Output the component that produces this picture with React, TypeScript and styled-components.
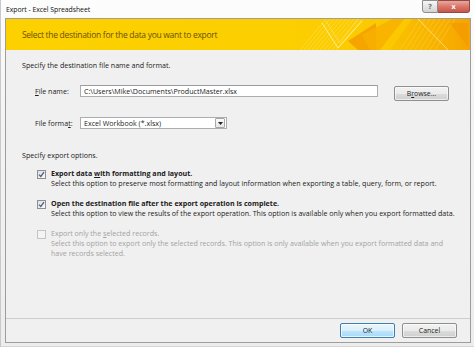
import React from "react";
import styled, { createGlobalStyle, css } from "styled-components";

const FONT = "'Open Sans', 'Noto Sans', 'Liberation Sans', sans-serif";

const Global = createGlobalStyle`
  html, body { margin: 0; padding: 0; background: #ffffff; }
  body { font-family: ${FONT}; }
  #root { width: 474px; height: 347px; }
`;

const Window = styled.div`
  width: 474px;
  height: 347px;
  box-sizing: border-box;
  display: flex;
  flex-direction: column;
  padding: 0 3px 4px 5px;
  background: linear-gradient(180deg, #fdfdfd 0%, #f4f4f4 30%, #ededed 100%);
  box-shadow: inset 1px 0 0 #c9c9c9, inset 0 -1px 0 #d6d6d6;
  font-family: ${FONT};
  color: #1b1b1b;
  overflow: hidden;
`;

const TitleBar = styled.div`
  height: 18px;
  display: flex;
  align-items: flex-start;
  justify-content: space-between;
`;

const Title = styled.span`
  margin: 5px 0 0 1px;
  font-size: 6.9px;
  line-height: 10px;
  color: #111;
  letter-spacing: -0.05px;
`;

const Captions = styled.div`
  display: flex;
  margin-right: 1px;
`;

const CapButton = styled.div<{ $close?: boolean }>`
  height: 13px;
  box-sizing: border-box;
  display: flex;
  align-items: center;
  justify-content: center;
  font-family: 'DejaVu Sans', sans-serif;
  font-size: 7px;
  font-weight: bold;
  ${(p) =>
    p.$close
      ? css`
          width: 32px;
          color: #fff;
          background: linear-gradient(180deg, #e9a89f 0%, #d9776b 50%, #c9544a 100%);
          border: 1px solid #8f4a44;
          border-left: none;
          border-radius: 0 0 3px 0;
        `
      : css`
          width: 16px;
          color: #777;
          background: linear-gradient(180deg, #f7f7f7 0%, #e3e3e3 55%, #d2d2d2 100%);
          border: 1px solid #8c8c8c;
          border-radius: 0 0 0 3px;
        `}
`;

const Client = styled.div`
  flex: 1;
  display: flex;
  flex-direction: column;
  border: 1px solid #9d9d9d;
  background: #f0f0f0;
`;

const Banner = styled.div`
  height: 31px;
  display: flex;
  align-items: center;
  background: linear-gradient(90deg, #fdd000 0%, #fccf00 60%, #fbc400 100%);
  overflow: hidden;
`;

const BannerText = styled.span`
  padding-left: 16px;
  font-size: 8.5px;
  letter-spacing: -0.3px;
  line-height: 12px;
  color: #6a5200;
  white-space: nowrap;
`;

const BannerArt = styled.svg`
  margin-left: auto;
  flex: none;
`;

const Content = styled.div`
  flex: 1;
  display: flex;
  flex-direction: column;
  padding: 10px 0 0 16px;
  font-size: 7.1px;
  line-height: 10px;
`;

const Heading = styled.div<{ $mt?: number }>`
  margin-top: ${(p) => p.$mt ?? 0}px;
  color: #1b1b1b;
`;

const FieldRow = styled.div<{ $mt: number }>`
  margin-top: ${(p) => p.$mt}px;
  margin-left: 13px;
  display: flex;
  align-items: flex-start;
`;

const FieldLabel = styled.span`
  width: 45px;
  flex: none;
  line-height: 12px;
`;

const TextBox = styled.div`
  width: 298px;
  height: 12px;
  box-sizing: border-box;
  border: 1px solid #abadb3;
  border-top-color: #9a9ca3;
  background: #fff;
  padding-left: 3px;
  line-height: 10px;
  white-space: nowrap;
`;

const Combo = styled.div`
  width: 147px;
  height: 12px;
  box-sizing: border-box;
  border: 1px solid #abadb3;
  background: #fff;
  padding-left: 3px;
  display: flex;
  align-items: center;
  justify-content: space-between;
  line-height: 10px;
`;

const ComboArrow = styled.span`
  width: 10px;
  height: 10px;
  box-sizing: border-box;
  margin-right: 1px;
  border: 1px solid #a7a7a7;
  border-radius: 1px;
  background: linear-gradient(180deg, #fafafa 0%, #e6e6e6 100%);
  display: flex;
  align-items: center;
  justify-content: center;
`;

const Button = styled.div<{ $default?: boolean; $ml?: number; $mt?: number }>`
  width: 55px;
  height: 15px;
  box-sizing: border-box;
  margin-left: ${(p) => p.$ml ?? 0}px;
  margin-top: ${(p) => p.$mt ?? 0}px;
  border-radius: 2px;
  border: 1px solid ${(p) => (p.$default ? "#3c7fb1" : "#8e8f8f")};
  background: ${(p) =>
    p.$default
      ? "linear-gradient(180deg, #eaf6fd 0%, #d9f0fc 50%, #bee6fd 51%, #a7d9f5 100%)"
      : "linear-gradient(180deg, #f2f2f2 0%, #ebebeb 50%, #dddddd 51%, #cfcfcf 100%)"};
  box-shadow: inset 0 0 0 1px ${(p) => (p.$default ? "rgba(255,255,255,0.7)" : "rgba(255,255,255,0.6)")};
  display: flex;
  align-items: center;
  justify-content: center;
  font-size: 6.9px;
  line-height: 10px;
  color: #1b1b1b;
`;

const Options = styled.div`
  margin-top: 8px;
  margin-left: 15px;
  display: flex;
  flex-direction: column;
  gap: 10px;
`;

const Option = styled.div<{ $disabled?: boolean }>`
  display: flex;
  align-items: flex-start;
  color: ${(p) => (p.$disabled ? "#a3a3a3" : "#1b1b1b")};
`;

const Box = styled.span<{ $disabled?: boolean }>`
  width: 9px;
  height: 9px;
  box-sizing: border-box;
  margin-top: 2px;
  margin-right: 5px;
  flex: none;
  border: 1px solid ${(p) => (p.$disabled ? "#c4c4c4" : "#8f8f8f")};
  background: ${(p) => (p.$disabled ? "#f4f4f4" : "linear-gradient(135deg, #dedede 0%, #fbfbfb 100%)")};
  display: flex;
  align-items: center;
  justify-content: center;
`;

const OptionText = styled.div`
  display: flex;
  flex-direction: column;
`;

const OptionLabel = styled.span<{ $bold?: boolean }>`
  font-weight: ${(p) => (p.$bold ? 700 : 400)};
`;

const OptionDesc = styled.span`
  width: 410px;
`;

const Footer = styled.div`
  height: 24px;
  box-sizing: border-box;
  border-top: 1px solid #cdcdcd;
  display: flex;
  justify-content: flex-end;
  align-items: flex-start;
  padding: 4px 13px 0 0;
`;

const Check = () => (
  <svg width="7" height="7" viewBox="0 0 7 7">
    <path d="M1 3.6 L2.8 5.4 L6 1.2" fill="none" stroke="#4a5d8c" strokeWidth="1.3" />
  </svg>
);

const Art = () => (
  <BannerArt width="170" height="31" viewBox="0 0 170 31">
    <defs>
      <linearGradient id="og" x1="0" y1="0" x2="1" y2="0">
        <stop offset="0" stopColor="#f7b000" stopOpacity="0.3" />
        <stop offset="1" stopColor="#f5a300" stopOpacity="0.95" />
      </linearGradient>
    </defs>
    {Array.from({ length: 10 }).map((_, i) => (
      <line key={i} x1={i * 4} y1={31} x2={i * 4 + 26} y2={0} stroke="#ffe46a" strokeWidth="0.7" opacity="0.7" />
    ))}
    <polyline points="22,4 38,29 62,2" fill="none" stroke="#fff2a8" strokeWidth="1" opacity="0.85" />
    <polyline points="26,2 40,24 58,0" fill="none" stroke="#fff0a0" strokeWidth="0.6" opacity="0.6" />
    <polygon points="48,22 76,4 76,31 58,31" fill="#f4a000" opacity="0.9" />
    <polygon points="62,16 92,0 104,0 80,31 70,31" fill="#f8b000" opacity="0.85" />
    <polygon points="90,31 112,0 170,0 170,31" fill="url(#og)" />
    {Array.from({ length: 8 }).map((_, i) => (
      <line key={"r" + i} x1={100 + i * 5} y1={31} x2={120 + i * 5} y2={0} stroke="#ffd64a" strokeWidth="0.7" opacity="0.6" />
    ))}
    <polyline points="118,0 148,31" fill="none" stroke="#ffe58a" strokeWidth="1" opacity="0.8" />
    <polygon points="150,4 168,4 168,28" fill="#f39a00" opacity="0.75" />
  </BannerArt>
);

export default function App() {
  return (
    <>
      <Global />
      <Window>
        <TitleBar>
          <Title>Export - Excel Spreadsheet</Title>
          <Captions>
            <CapButton>?</CapButton>
            <CapButton $close>x</CapButton>
          </Captions>
        </TitleBar>
        <Client>
          <Banner>
            <BannerText>Select the destination for the data you want to export</BannerText>
            <Art />
          </Banner>
          <Content>
            <Heading>Specify the destination file name and format.</Heading>
            <FieldRow $mt={15}>
              <FieldLabel>
                <u>F</u>ile name:
              </FieldLabel>
              <TextBox>C:\Users\Mike\Documents\ProductMaster.xlsx</TextBox>
              <Button $ml={16} $mt={1}>
                B<u>r</u>owse...
              </Button>
            </FieldRow>
            <FieldRow $mt={16}>
              <FieldLabel>
                File forma<u>t</u>:
              </FieldLabel>
              <Combo>
                <span>Excel Workbook (*.xlsx)</span>
                <ComboArrow>
                  <svg width="5" height="3" viewBox="0 0 5 3">
                    <path d="M0 0 H5 L2.5 3 Z" fill="#222" />
                  </svg>
                </ComboArrow>
              </Combo>
            </FieldRow>
            <Heading $mt={21}>Specify export options.</Heading>
            <Options>
              <Option>
                <Box>
                  <Check />
                </Box>
                <OptionText>
                  <OptionLabel $bold>
                    Export data <u>w</u>ith formatting and layout.
                  </OptionLabel>
                  <OptionDesc>
                    Select this option to preserve most formatting and layout information when exporting a table, query, form, or report.
                  </OptionDesc>
                </OptionText>
              </Option>
              <Option>
                <Box>
                  <Check />
                </Box>
                <OptionText>
                  <OptionLabel $bold>Open the destination file after the export operation is complete.</OptionLabel>
                  <OptionDesc>
                    Select this option to view the results of the export operation. This option is available only when you export formatted data.
                  </OptionDesc>
                </OptionText>
              </Option>
              <Option $disabled>
                <Box $disabled />
                <OptionText>
                  <OptionLabel>
                    Export only the <u>s</u>elected records.
                  </OptionLabel>
                  <OptionDesc>
                    Select this option to export only the selected records. This option is only available when you export formatted data and
                    <br />
                    have records selected.
                  </OptionDesc>
                </OptionText>
              </Option>
            </Options>
          </Content>
          <Footer>
            <Button $default>OK</Button>
            <Button $ml={7}>Cancel</Button>
          </Footer>
        </Client>
      </Window>
    </>
  );
}
